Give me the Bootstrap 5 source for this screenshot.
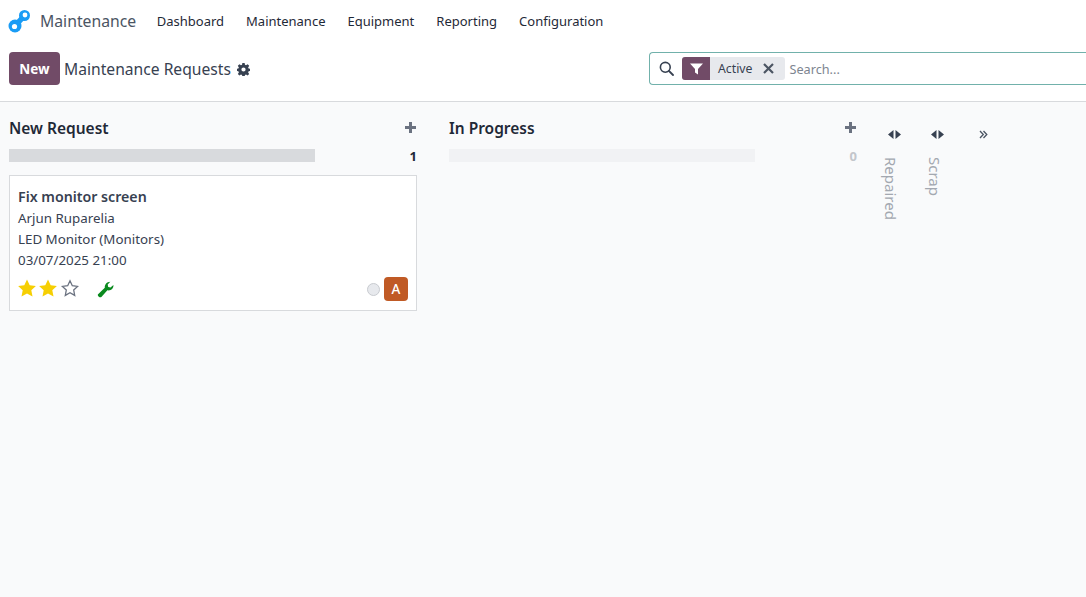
<!DOCTYPE html>
<html lang="en">
<head>
<meta charset="utf-8">
<title>Maintenance Requests</title>
<link href="https://cdn.jsdelivr.net/npm/bootstrap@5.3.0/dist/css/bootstrap.min.css" rel="stylesheet">
<script src="https://cdn.jsdelivr.net/npm/bootstrap@5.3.0/dist/js/bootstrap.bundle.min.js"></script>
<style>
html,body{height:100%}
body{font-family:"Noto Sans","Open Sans",sans-serif;font-size:13px;color:#374151;background:#f9fafb;overflow:hidden;width:1086px;height:597px}
.top-shell{background:#fff;border-bottom:1px solid #d8dadd;height:102px}
.app-bar{height:43px;padding-left:8px}
.brand-name{font-size:15.75px;color:#4b5563;margin-left:9px;margin-right:9.500px}
.menu-link{color:#1f2937;font-size:13px;padding:0 11px;text-decoration:none}
.ctrl-bar{height:58px;padding:9px 0 0 9px}
.new-btn{background:#714b67;color:#fff;font-weight:700;font-size:13.5px;border:0;border-radius:4px;width:51px;height:33px;padding:2px 0 0}
.new-btn:hover{background:#714b67;color:#fff}
.view-title{font-size:15.65px;color:#374151;margin-left:4px;position:relative;top:1px}
.gear-ico{margin-left:6px;position:relative;top:1px}
.search-box{margin-left:auto;width:438px;height:33px;border:1px solid #71b1ab;border-right:0;border-radius:4px 0 0 4px;padding-left:9px;margin-right:-1px}
.facet{height:23px;margin-left:8px;border-radius:3px;background:#e7e9ed;overflow:hidden}
.facet-ico{width:28px;background:#714b67}
.facet-txt{font-size:12.25px;color:#374151;padding:2px 0 0 8px}
.facet-x{margin:0 11px;}
.search-ph{color:#7d8590;font-size:12.7px;margin-left:4px;position:relative;top:1px}
.board{padding-left:9px}
.kol{width:408px;margin-right:32px}
.kol-last{margin-right:15.5px}
.kol-head{height:26px;margin-top:14px}
.kol-title{font-size:15.5px;font-weight:600;color:#1f2937}
.plus-ico{margin-right:1px;margin-bottom:3px}
.bar-row{height:13px;margin-top:7px}
.prog-track{width:306px;height:13px}
.prog-on{background:#d8dadd}
.prog-off{background:#f1f2f4}
.prog-num{font-size:13px;font-weight:700;line-height:15px;position:relative;top:1px}
.num-on{color:#1f2937}
.num-off{color:#c3c6cb}
.req-card{background:#fff;border:1px solid #d8dadd;height:136px;margin-top:13px;padding:11px 8px 0}
.req-title{font-size:14.2px;font-weight:600;color:#374151;line-height:20px}
.req-line{line-height:21px;color:#374151;font-size:13.35px;position:relative;top:1px}
.req-foot{margin-top:7px;height:24px}
.star-row{position:relative;top:-1px}
.wrench{margin-left:18px}
.dot-state{width:13px;height:13px;border-radius:50%;background:#e7e9ed;border:1px solid #c8cbd0;margin-right:4px}
.avatar-a{width:24px;height:24px;border-radius:4px;background:#c05a25;color:#fff;font-size:13.5px;font-weight:500}
.fold{width:43.5px;padding-top:28px}
.fold-name{writing-mode:vertical-rl;font-size:15px;color:#a3a8b0;margin:18px 6px 0 0;line-height:20px}
.expand-all{margin-left:19px;padding-top:28px;width:20px}
</style>
</head>
<body>
<header class="top-shell">
  <nav class="app-bar d-flex align-items-center">
    <svg width="23" height="23" viewBox="0 0 23 23"><path d="M7 16 16.500 5.500" stroke="#1a9cf5" stroke-width="5.500"/><circle cx="7" cy="16" r="6.500" fill="#1a9cf5"/><circle cx="16.500" cy="5.500" r="5.500" fill="#1a9cf5"/><circle cx="6.500" cy="16.500" r="2.600" fill="#fff"/><circle cx="17" cy="5" r="2.400" fill="#fff"/></svg>
    <span class="brand-name">Maintenance</span>
    <a class="menu-link" href="#">Dashboard</a>
    <a class="menu-link" href="#">Maintenance</a>
    <a class="menu-link" href="#">Equipment</a>
    <a class="menu-link" href="#">Reporting</a>
    <a class="menu-link" href="#">Configuration</a>
  </nav>
  <div class="ctrl-bar d-flex align-items-start">
    <button class="btn new-btn" type="button">New</button>
    <div class="d-flex align-items-center" style="height:33px">
      <span class="view-title">Maintenance Requests</span>
      <svg class="gear-ico" width="13" height="13" viewBox="0 0 16 16"><path fill="#374151" fill-rule="evenodd" d="M6.600 0h2.800l.4 2.200 1.300.6 1.900-1.300 2 2-1.300 1.900.6 1.300 2.200.4v2.800l-2.200.4-.6 1.300 1.300 1.900-2 2-1.900-1.300-1.300.6-.4 2.200H6.600l-.4-2.200-1.300-.6L3 15.500l-2-2 1.300-1.900-.6-1.300L-.5 9.900V7.100l2.200-.4.6-1.300L1 3.500l2-2 1.900 1.300 1.300-.6zM8 5.400a2.600 2.600 0 1 0 0 5.200 2.600 2.600 0 0 0 0-5.200z"/></svg>
    </div>
    <div class="search-box d-flex align-items-center">
      <svg width="15" height="15" viewBox="0 0 15 15"><circle cx="6.300" cy="6.300" r="4.900" fill="none" stroke="#374151" stroke-width="1.600"/><path d="M10 10l4 4" stroke="#374151" stroke-width="1.800" stroke-linecap="round"/></svg>
      <div class="facet d-flex align-items-stretch">
        <span class="facet-ico d-flex align-items-center justify-content-center"><svg width="13" height="12" viewBox="0 0 13 12"><path fill="#fff" d="M0 .5h13L8 6v5.500L5 9.500V6z"/></svg></span>
        <span class="facet-txt d-flex align-items-center">Active</span>
        <span class="facet-x d-flex align-items-center"><svg width="11" height="11" viewBox="0 0 11 11"><path d="M1 1l9 9M10 1l-9 9" stroke="#4b5563" stroke-width="2.200"/></svg></span>
      </div>
      <span class="search-ph">Search...</span>
    </div>
  </div>
</header>
<main class="board d-flex align-items-start">
  <section class="kol">
    <div class="kol-head d-flex align-items-center justify-content-between">
      <span class="kol-title">New Request</span>
      <svg class="plus-ico" width="11" height="11" viewBox="0 0 11 11"><path d="M5.500 0v11M0 5.500h11" stroke="#6b7280" stroke-width="3"/></svg>
    </div>
    <div class="bar-row d-flex align-items-center justify-content-between">
      <div class="prog-track prog-on"></div>
      <span class="prog-num num-on">1</span>
    </div>
    <article class="req-card">
      <div class="req-title">Fix monitor screen</div>
      <div class="req-line">Arjun Ruparelia</div>
      <div class="req-line">LED Monitor (Monitors)</div>
      <div class="req-line">03/07/2025 21:00</div>
      <div class="req-foot d-flex align-items-center">
        <svg class="star-row" width="61" height="18" viewBox="0 0 61 18"><path fill="#f6cf03" d="M9 .5l2.700 5.700 6.200.8-4.600 4.300 1.200 6.200L9 14.400l-5.500 3.100 1.200-6.200L.1 7l6.200-.8z"/><path fill="#f6cf03" transform="translate(21)" d="M9 .5l2.700 5.700 6.200.8-4.600 4.300 1.200 6.200L9 14.400l-5.500 3.100 1.200-6.200L.1 7l6.200-.8z"/><path fill="none" stroke="#6b7280" stroke-width="1.300" transform="translate(43)" d="M9 1.800l2.300 4.900 5.300.7-3.900 3.700 1 5.300L9 13.800l-4.700 2.600 1-5.300L1.400 7.400l5.300-.7z"/></svg>
        <svg class="wrench" width="17" height="17" viewBox="0 0 17 17"><path fill="#0a8a1e" d="M.8 13.400 7.800 6.800C7.500 3.400 9.800.9 13.300.8L10.700 3.600l.5 2.300 2.300.6L16.400 4c.3 3.600-2.600 6-6 5.300l-6 6.700a2.500 2.500 0 0 1-3.600-2.600z"/></svg>
        <span class="dot-state ms-auto"></span>
        <span class="avatar-a d-flex align-items-center justify-content-center">A</span>
      </div>
    </article>
  </section>
  <section class="kol kol-last">
    <div class="kol-head d-flex align-items-center justify-content-between">
      <span class="kol-title">In Progress</span>
      <svg class="plus-ico" width="11" height="11" viewBox="0 0 11 11"><path d="M5.500 0v11M0 5.500h11" stroke="#6b7280" stroke-width="3"/></svg>
    </div>
    <div class="bar-row d-flex align-items-center justify-content-between">
      <div class="prog-track prog-off"></div>
      <span class="prog-num num-off">0</span>
    </div>
  </section>
  <section class="fold d-flex flex-column align-items-center">
    <svg width="13" height="9" viewBox="0 0 13 9"><path fill="#374151" d="M5.500 0v9L0 4.500zM7.500 0v9L13 4.500z"/></svg>
    <span class="fold-name">Repaired</span>
  </section>
  <section class="fold d-flex flex-column align-items-center">
    <svg width="13" height="9" viewBox="0 0 13 9"><path fill="#374151" d="M5.500 0v9L0 4.500zM7.500 0v9L13 4.500z"/></svg>
    <span class="fold-name">Scrap</span>
  </section>
  <div class="expand-all">
    <svg class="d-block" width="9" height="9" viewBox="0 0 9 9"><path d="M1 1l3.300 3.500L1 8M4.500 1l3.300 3.500L4.500 8" fill="none" stroke="#4b5563" stroke-width="1.300"/></svg>
  </div>
</main>
</body>
</html>
